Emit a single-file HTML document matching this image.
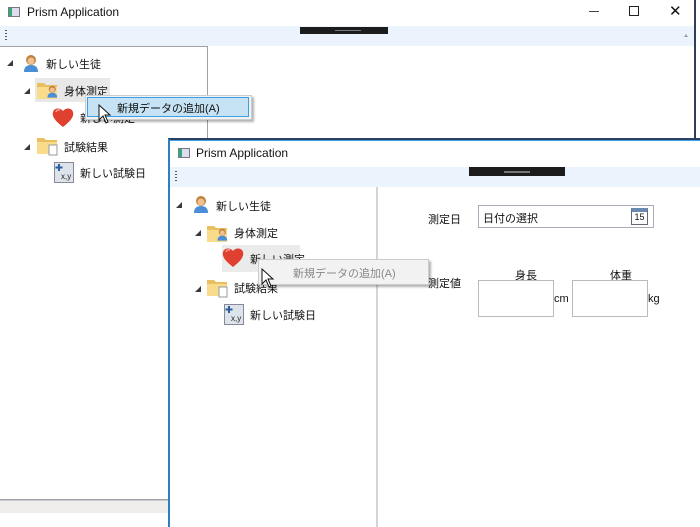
<!DOCTYPE html>
<html><head><meta charset="utf-8"><style>
*{margin:0;padding:0;box-sizing:border-box}
body{width:700px;height:527px;overflow:hidden;background:#fff;position:relative;font-family:"Liberation Sans","Noto Sans CJK JP",sans-serif;font-size:11px;color:#111}
.a{position:absolute}
.t{position:absolute;white-space:nowrap;font-size:11px}
.tb{background:#ebf3fc}
.grip{background:#1c1c1c}
.dots{position:absolute;width:2px;height:10px;background:repeating-linear-gradient(#555 0 1px,transparent 1px 3px)}
</style></head><body>
<svg width="0" height="0" style="position:absolute"><defs>
<g id="person"><circle cx="9" cy="6" r="5" fill="#c0803a"/><circle cx="9" cy="7" r="3.5" fill="#f0c090"/><path d="M2 18 Q2 11 9 11 Q16 11 16 18Z" fill="#4a8ed8"/></g>
<g id="folder"><path d="M1 4 h7 l2 2 h11 v14 h-20z" fill="#e8c060"/><path d="M1 8 h20 v12 h-20z" fill="#f8dc8c"/></g>
<g id="heart"><path d="M11 21 C2 14 0 10 1 6 C2 2 8 1 11 5 C14 1 20 2 21 6 C22 10 20 14 11 21Z" fill="#e04030"/><path d="M4 6 Q5 3 8 4" stroke="#f8a090" stroke-width="1.5" fill="none"/></g>
<g id="xy"><rect x="0.5" y="0.5" width="19" height="20" fill="#dde3ea" stroke="#889"/><path d="M5 2v7M1.5 5.5h7" stroke="#2a5fa0" stroke-width="2"/><text x="7" y="17" font-size="8" font-family="Liberation Sans" fill="#222">x,y</text></g>
<polygon id="exp" points="6,0 6,6 0,6" fill="#3a3a3a"/>
<path id="cur" d="M1 1 L1 16 L5 12 L8 19 L10 18 L7 11 L12 11 Z" fill="#fff" stroke="#111" stroke-width="1"/>
</defs></svg>

<!-- back window -->
<div class="a" style="left:0;top:0;width:696px;height:138px;border-right:2px solid #2c3e58"></div>
<div class="a" style="left:8px;top:7px;width:12px;height:10px;border:1px solid #778;background:linear-gradient(90deg,#3a7 0 3px,#dde 3px)"></div>
<div class="t" style="left:27px;top:5px;font-size:12px">Prism Application</div>
<div class="a" style="left:589px;top:11px;width:10px;height:1px;background:#444"></div>
<div class="a" style="left:629px;top:6px;width:10px;height:10px;border:1px solid #222"></div>
<div class="t" style="left:669px;top:2px;font-size:15px">✕</div>
<div class="a tb" style="left:0;top:26px;width:694px;height:20px"></div>
<div class="dots" style="left:5px;top:30px"></div>
<div class="a grip" style="left:300px;top:27px;width:88px;height:7px"></div>
<div class="a" style="left:335px;top:30px;width:26px;height:1px;background:#777"></div>
<div class="t" style="left:684px;top:33px;font-size:7px;color:#555">⩡</div>
<div class="a" style="left:0;top:46px;width:208px;height:454px;border:1px solid #a0a0a8;border-left:none"></div>
<div class="a" style="left:0;top:500px;width:168px;height:13px;background:#f0eded;border-top:1px solid #ccc"></div>
<svg class="a" style="left:7px;top:60px" width="6" height="6"><use href="#exp"/></svg>
<svg class="a" style="left:22px;top:54px" width="18" height="20"><use href="#person"/></svg>
<div class="t" style="left:46px;top:56px">新しい生徒</div>
<div class="a" style="left:35px;top:78px;width:75px;height:24px;background:#e8e8e8"></div>
<svg class="a" style="left:24px;top:88px" width="6" height="6"><use href="#exp"/></svg>
<svg class="a" style="left:36px;top:79px" width="24" height="22"><use href="#folder"/><g transform="translate(10,6) scale(.7)"><use href="#person"/></g></svg>
<div class="t" style="left:64px;top:83px">身体測定</div>
<svg class="a" style="left:52px;top:106px" width="23" height="23"><use href="#heart"/></svg>
<div class="t" style="left:80px;top:110px">新しい測定</div>
<svg class="a" style="left:24px;top:144px" width="6" height="6"><use href="#exp"/></svg>
<svg class="a" style="left:36px;top:134px" width="24" height="22"><use href="#folder"/><rect x="13" y="11" width="8" height="10" fill="#fff" stroke="#999"/></svg>
<div class="t" style="left:64px;top:139px">試験結果</div>
<svg class="a" style="left:54px;top:162px" width="21" height="22"><use href="#xy"/></svg>
<div class="t" style="left:80px;top:165px">新しい試験日</div>
<div class="a" style="left:85px;top:95px;width:167px;height:25px;background:#f2f2f2;border:1px solid #ccc;box-shadow:2px 2px 2px rgba(0,0,0,.3)"></div>
<div class="a" style="left:87px;top:97px;width:162px;height:20px;background:#c5e3f4;border:1px solid #3c9ee6"></div>
<div class="t" style="left:117px;top:100px">新規データの追加(A)</div>
<svg class="a" style="left:98px;top:104px" width="14" height="21"><use href="#cur"/></svg>

<!-- front window -->
<div class="a" style="left:168px;top:138px;width:532px;height:389px;background:#fff;border-top:2px solid #2c4060;border-left:2px solid #2d7fc4"></div>
<div class="a" style="left:170px;top:140px;width:530px;height:1px;background:#3aa0e8"></div>
<div class="a" style="left:178px;top:148px;width:12px;height:10px;border:1px solid #778;background:linear-gradient(90deg,#3a7 0 3px,#dde 3px)"></div>
<div class="t" style="left:196px;top:146px;font-size:12px">Prism Application</div>
<div class="a tb" style="left:170px;top:167px;width:530px;height:20px"></div>
<div class="dots" style="left:175px;top:171px"></div>
<div class="a grip" style="left:469px;top:167px;width:96px;height:9px"></div>
<div class="a" style="left:504px;top:171px;width:26px;height:2px;background:#777"></div>
<div class="a" style="left:170px;top:187px;width:208px;height:340px;border-right:2px solid #d4d4d8"></div>
<svg class="a" style="left:176px;top:202px" width="6" height="6"><use href="#exp"/></svg>
<svg class="a" style="left:192px;top:195px" width="18" height="20"><use href="#person"/></svg>
<div class="t" style="left:216px;top:198px">新しい生徒</div>
<svg class="a" style="left:195px;top:230px" width="6" height="6"><use href="#exp"/></svg>
<svg class="a" style="left:206px;top:222px" width="24" height="22"><use href="#folder"/><g transform="translate(10,6) scale(.7)"><use href="#person"/></g></svg>
<div class="t" style="left:234px;top:225px">身体測定</div>
<div class="a" style="left:222px;top:245px;width:78px;height:27px;background:#ebebeb"></div>
<svg class="a" style="left:222px;top:246px" width="23" height="23"><use href="#heart"/></svg>
<div class="t" style="left:250px;top:251px">新しい測定</div>
<svg class="a" style="left:195px;top:286px" width="6" height="6"><use href="#exp"/></svg>
<svg class="a" style="left:206px;top:276px" width="24" height="22"><use href="#folder"/><rect x="13" y="11" width="8" height="10" fill="#fff" stroke="#999"/></svg>
<div class="t" style="left:234px;top:280px">試験結果</div>
<svg class="a" style="left:224px;top:304px" width="21" height="22"><use href="#xy"/></svg>
<div class="t" style="left:250px;top:307px">新しい試験日</div>

<div class="t" style="left:428px;top:211px">測定日</div>
<div class="a" style="left:478px;top:205px;width:176px;height:23px;border:1px solid #aab"></div>
<div class="t" style="left:483px;top:210px">日付の選択</div>
<div class="a" style="left:631px;top:208px;width:17px;height:17px;border:1px solid #667;background:#fff;border-top:4px solid #6a8ab0;font-size:9px;text-align:center;line-height:11px">15</div>
<div class="t" style="left:428px;top:275px">測定値</div>
<div class="t" style="left:515px;top:267px">身長</div>
<div class="t" style="left:610px;top:267px">体重</div>
<div class="a" style="left:478px;top:280px;width:76px;height:37px;border:1px solid #bbb"></div>
<div class="a" style="left:572px;top:280px;width:76px;height:37px;border:1px solid #bbb"></div>
<div class="t" style="left:554px;top:293px">cm</div>
<div class="t" style="left:648px;top:293px">kg</div>

<div class="a" style="left:258px;top:259px;width:171px;height:26px;background:#f2f2f2;border:1px solid #ccc;box-shadow:2px 2px 2px rgba(0,0,0,.3)"></div>
<div class="t" style="left:293px;top:265px;color:#888">新規データの追加(A)</div>
<svg class="a" style="left:261px;top:268px" width="14" height="21"><use href="#cur"/></svg>
</body></html>
